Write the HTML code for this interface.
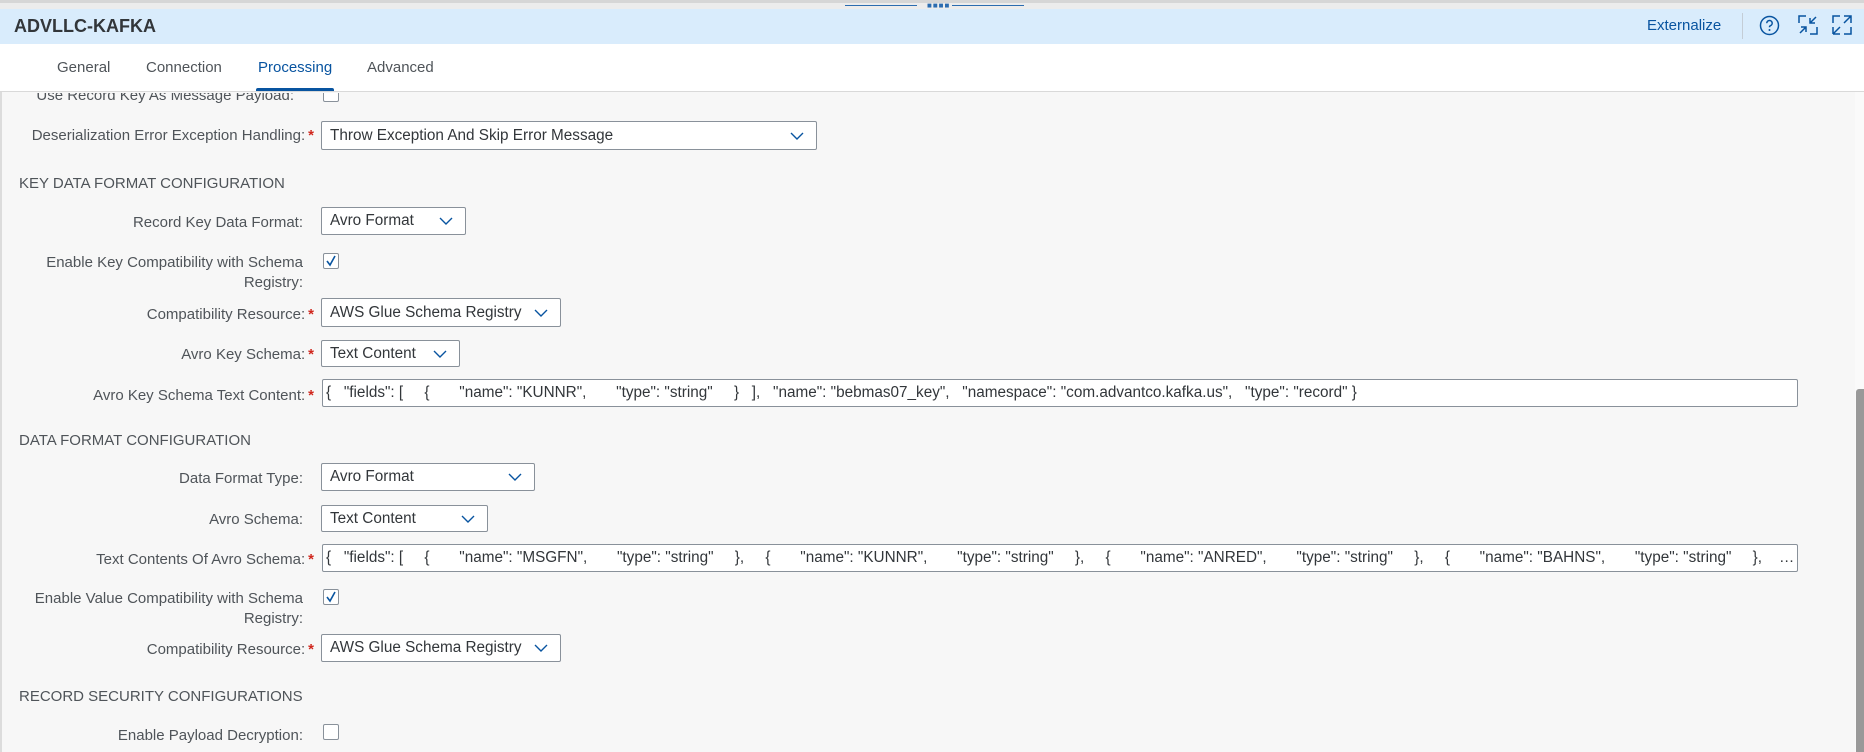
<!DOCTYPE html>
<html><head><meta charset="utf-8"><style>
*{margin:0;padding:0;box-sizing:border-box}
body{width:1864px;height:752px;overflow:hidden;background:#f7f7f7;font-family:"Liberation Sans",Arial,sans-serif;position:relative;color:#32363a}
.a{position:absolute}
.lbl{position:absolute;right:1561px;font-size:15px;color:#4f5459;text-align:right;white-space:nowrap;line-height:20px;margin-top:2px}
.star{color:#d0271d;font-weight:bold;margin-left:3px;margin-right:-11px}
.inp{position:absolute;left:321px;background:#fff;border:1px solid #89919a;border-radius:2px;font-size:15.3px;color:#32363a;padding-left:8px;white-space:pre;overflow:hidden}
.chev{position:absolute;right:12px;top:50%;margin-top:-4px;width:14px;height:8px}
.cb{position:absolute;left:323px;width:16px;height:16px;background:#fff;border:1px solid #89919a;border-radius:2px}
.sec{position:absolute;left:19px;font-size:15px;color:#4f5459;line-height:20px;margin-top:1px}
.tab{position:absolute;top:59px;font-size:15px;color:#4f5459}
</style></head><body>
<div class="a" style="left:0;top:0;width:1864px;height:3px;background:#d6d6d6"></div>
<div class="a" style="left:0;top:3px;width:1864px;height:6px;background:#ececec"></div>
<div class="a" style="left:845px;top:5px;width:72px;height:1px;background:#2b6cb0"></div>
<div class="a" style="left:952px;top:5px;width:72px;height:1px;background:#2b6cb0"></div>
<div class="a" style="left:927px;top:4px;font-size:8px;color:#2b6cb0;letter-spacing:1px;line-height:4px">■■■■</div>
<div class="a" style="left:0;top:9px;width:1864px;height:35px;background:#d9ecfc"></div>
<div class="a" style="left:14px;top:16px;font-size:18px;font-weight:bold;color:#32363a">ADVLLC-KAFKA</div>
<div class="a" style="left:1647px;top:17px;font-size:15px;color:#0854a0">Externalize</div>
<div class="a" style="left:1742px;top:13px;width:1px;height:26px;background:#c4cdd6"></div>
<svg class="a" style="left:1759px;top:15px" width="21" height="21" viewBox="0 0 21 21"><circle cx="10.5" cy="10.5" r="9" fill="none" stroke="#0854a0" stroke-width="1.5"/><path d="M7.8 8.2a2.7 2.7 0 1 1 3.6 2.5c-.8.3-.9.8-.9 1.6" fill="none" stroke="#0854a0" stroke-width="1.5"/><circle cx="10.5" cy="15" r="1" fill="#0854a0"/></svg>
<svg class="a" style="left:1798px;top:15px" width="20" height="20" viewBox="0 0 20 20" fill="none" stroke="#0854a0" stroke-width="1.5"><path d="M1 8V1h7M19 12v7h-7M18 2l-6 6M12 3v5h5M2 18l6-6M3 12h5v5"/></svg>
<svg class="a" style="left:1832px;top:15px" width="20" height="20" viewBox="0 0 20 20" fill="none" stroke="#0854a0" stroke-width="1.5"><path d="M1 8V1h7M19 12v7h-7M12 1h7v7M19 1l-7 7M1 19l7-7M1 19h7M1 19v-7"/></svg>
<div class="a" style="left:0;top:44px;width:1864px;height:48px;background:#fff;border-bottom:1px solid #d9d9d9"></div>
<div class="tab" style="left:57px">General</div>
<div class="tab" style="left:146px">Connection</div>
<div class="tab" style="left:258px;color:#0854a0">Processing</div>
<div class="tab" style="left:367px">Advanced</div>
<div class="a" style="left:256px;top:88px;width:78px;height:3px;background:#0854a0;border-radius:2px 2px 0 0"></div>
<div class="a" style="left:0;top:92px;width:2px;height:660px;background:#dcdcdc"></div>
<div class="a" style="left:1855px;top:92px;width:9px;height:660px;background:#fafafa"></div>
<div class="a" style="left:1856px;top:389px;width:8px;height:363px;background:#999;border-radius:3px 0 0 0"></div>

<div style="position:absolute;left:0;top:93px;width:1855px;height:659px;overflow:hidden">
<div style="position:absolute;left:0;top:-93px;width:1855px;height:752px">
<div class="lbl" style="top:84px">Use Record Key As Message Payload:</div>
<div class="cb" style="top:86px"></div>
</div></div>

<div class="lbl" style="top:124px">Deserialization Error Exception Handling:<span class="star">*</span></div>
<div class="inp" style="top:121px;width:496px;height:29px;line-height:27px">Throw Exception And Skip Error Message<svg class="chev" viewBox="0 0 14 8"><path d="M1 1l6 6 6-6" fill="none" stroke="#0854a0" stroke-width="1.4"/></svg></div>

<div class="sec" style="top:173px">KEY DATA FORMAT CONFIGURATION</div>
<div class="lbl" style="top:211px">Record Key Data Format:</div>
<div class="inp" style="top:207px;width:145px;height:28px;line-height:26px">Avro Format<svg class="chev" viewBox="0 0 14 8"><path d="M1 1l6 6 6-6" fill="none" stroke="#0854a0" stroke-width="1.4"/></svg></div>
<div class="lbl" style="top:251px;line-height:20px">Enable Key Compatibility with Schema<br>Registry:</div>
<div class="cb" style="top:253px"><svg width="14" height="14" viewBox="0 0 14 14" style="position:absolute;left:0;top:0"><path d="M3 7l3 4 5-9" fill="none" stroke="#0854a0" stroke-width="1.6"/></svg></div>
<div class="lbl" style="top:303px">Compatibility Resource:<span class="star">*</span></div>
<div class="inp" style="top:298px;width:240px;height:29px;line-height:27px">AWS Glue Schema Registry<svg class="chev" viewBox="0 0 14 8"><path d="M1 1l6 6 6-6" fill="none" stroke="#0854a0" stroke-width="1.4"/></svg></div>
<div class="lbl" style="top:343px">Avro Key Schema:<span class="star">*</span></div>
<div class="inp" style="top:340px;width:139px;height:27px;line-height:25px">Text Content<svg class="chev" viewBox="0 0 14 8"><path d="M1 1l6 6 6-6" fill="none" stroke="#0854a0" stroke-width="1.4"/></svg></div>
<div class="lbl" style="top:384px">Avro Key Schema Text Content:<span class="star">*</span></div>
<div class="inp" style="top:379px;left:322px;width:1476px;height:28px;line-height:26px;padding-left:3px">{   "fields": [     {       "name": "KUNNR",       "type": "string"     }   ],   "name": "bebmas07_key",   "namespace": "com.advantco.kafka.us",   "type": "record" }</div>

<div class="sec" style="top:430px">DATA FORMAT CONFIGURATION</div>
<div class="lbl" style="top:467px">Data Format Type:</div>
<div class="inp" style="top:463px;width:214px;height:28px;line-height:26px">Avro Format<svg class="chev" viewBox="0 0 14 8"><path d="M1 1l6 6 6-6" fill="none" stroke="#0854a0" stroke-width="1.4"/></svg></div>
<div class="lbl" style="top:508px">Avro Schema:</div>
<div class="inp" style="top:505px;width:167px;height:27px;line-height:25px">Text Content<svg class="chev" viewBox="0 0 14 8"><path d="M1 1l6 6 6-6" fill="none" stroke="#0854a0" stroke-width="1.4"/></svg></div>
<div class="lbl" style="top:548px">Text Contents Of Avro Schema:<span class="star">*</span></div>
<div class="inp" style="top:544px;left:322px;width:1476px;height:28px;line-height:26px;padding-left:3px;text-overflow:ellipsis">{   "fields": [     {       "name": "MSGFN",       "type": "string"     },     {       "name": "KUNNR",       "type": "string"     },     {       "name": "ANRED",       "type": "string"     },     {       "name": "BAHNS",       "type": "string"     },     { ...</div>
<div class="lbl" style="top:587px">Enable Value Compatibility with Schema<br>Registry:</div>
<div class="cb" style="top:589px"><svg width="14" height="14" viewBox="0 0 14 14" style="position:absolute;left:0;top:0"><path d="M3 7l3 4 5-9" fill="none" stroke="#0854a0" stroke-width="1.6"/></svg></div>
<div class="lbl" style="top:638px">Compatibility Resource:<span class="star">*</span></div>
<div class="inp" style="top:634px;width:240px;height:28px;line-height:26px">AWS Glue Schema Registry<svg class="chev" viewBox="0 0 14 8"><path d="M1 1l6 6 6-6" fill="none" stroke="#0854a0" stroke-width="1.4"/></svg></div>

<div class="sec" style="top:686px">RECORD SECURITY CONFIGURATIONS</div>
<div class="lbl" style="top:724px">Enable Payload Decryption:</div>
<div class="cb" style="top:724px"></div>
</body></html>
